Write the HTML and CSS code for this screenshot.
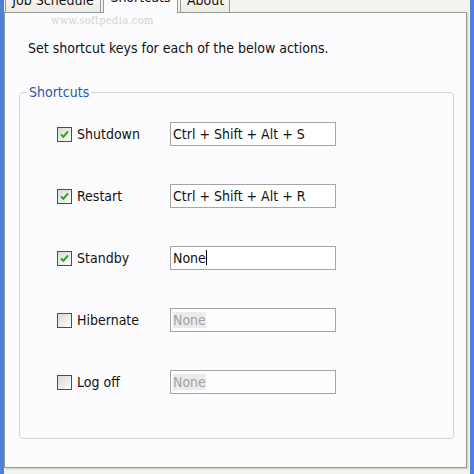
FILE: index.html
```html
<!DOCTYPE html>
<html lang="en">
<head>
  <meta charset="UTF-8">
  <title>Shortcuts</title>
  <link rel="stylesheet" href="styles.css">
</head>
<body>
  <div class="window">
    <div class="tabs">
      <div class="tab tab-job">Job Schedule</div>
      <div class="tab tab-active">Shortcuts</div>
      <div class="tab tab-about">About</div>
    </div>

    <div class="panel">
      <div class="watermark">www.softpedia.com</div>
      <p class="intro">Set shortcut keys for each of the below actions.</p>

      <fieldset class="group">
        <legend>Shortcuts</legend>

        <div class="row">
          <label class="check"><span class="box checked"><svg viewBox="0 0 15 15"><polyline points="3.5,7.5 6.2,10.2 11.5,4" /></svg></span>Shutdown</label>
          <div class="field">Ctrl + Shift + Alt + S</div>
        </div>

        <div class="row">
          <label class="check"><span class="box checked"><svg viewBox="0 0 15 15"><polyline points="3.5,7.5 6.2,10.2 11.5,4" /></svg></span>Restart</label>
          <div class="field">Ctrl + Shift + Alt + R</div>
        </div>

        <div class="row">
          <label class="check"><span class="box checked"><svg viewBox="0 0 15 15"><polyline points="3.5,7.5 6.2,10.2 11.5,4" /></svg></span>Standby</label>
          <div class="field">None<span class="caret"></span></div>
        </div>

        <div class="row">
          <label class="check"><span class="box"></span>Hibernate</label>
          <div class="field disabled"><span class="sel">None</span></div>
        </div>

        <div class="row">
          <label class="check"><span class="box"></span>Log off</label>
          <div class="field disabled"><span class="sel">None</span></div>
        </div>
      </fieldset>
    </div>
  </div>
</body>
</html>
```

FILE: styles.css
```css
/* Base */
html, body {
  margin: 0;
  height: 474px;
  overflow: hidden;
}

body {
  background: #f3f3ef;
  font-family: "DejaVu Sans Condensed", "DejaVu Sans", sans-serif;
  font-stretch: condensed;
  font-size: 14px;
  color: #111;
}

.window {
  height: 474px;
  box-sizing: border-box;
  border-left: 4px solid #4f80d8;
  border-right: 4px solid #4f80d8;
  display: flex;
  flex-direction: column;
}

/* Tabs */
.tabs {
  display: flex;
  align-items: flex-end;
  height: 22px;
  margin-top: -10px;
  padding-left: 1px;
  position: relative;
  z-index: 1;
}

.tab {
  box-sizing: border-box;
  height: 21px;
  padding: 0 6px;
  line-height: 17px;
  border: 1px solid #919b9c;
  border-bottom: none;
  border-radius: 3px 3px 0 0;
  background: linear-gradient(#ffffff, #eceae0);
  margin-right: 2px;
  text-align: center;
}

.tab-job {
  width: 96px;
}

.tab-active {
  width: 75px;
  height: 24px;
  line-height: 15px;
  background: #fcfcfe;
  margin-bottom: -1px;
}

.tab-about {
  width: 50px;
}

/* Panel */
.panel {
  position: relative;
  flex: 1;
  margin-bottom: 6px;
  margin-right: 3px;
  border: 1px solid #919b9c;
  background: #fcfcfe;
  box-shadow: 1px 1px 0 #d6d6d0, 2px 2px 0 #e6e6e2;
  padding: 0 12px 0 14px;
}

.watermark {
  position: absolute;
  left: 46px;
  top: 1px;
  font-family: "DejaVu Serif", serif;
  font-size: 11px;
  color: #d2d2d2;
  letter-spacing: 0.3px;
}

.intro {
  margin: 27px 0 0 9px;
  line-height: 16px;
}

/* Group box */
.group {
  margin: 28px 0 0 0;
  height: 355px;
  box-sizing: border-box;
  border: 1px solid #d6d6ce;
  border-radius: 4px;
  padding: 22px 0 0 7px;
}

.group legend {
  color: #2d56a8;
  padding: 0 2px;
  line-height: 16px;
}

.row {
  display: flex;
  align-items: center;
  height: 24px;
  margin-bottom: 38px;
  padding-left: 30px;
}

.check {
  display: flex;
  align-items: center;
  width: 113px;
  gap: 5px;
}

.box {
  box-sizing: border-box;
  width: 15px;
  height: 15px;
  border: 1px solid #2a5583;
  background: linear-gradient(135deg, #dcdcd6, #fbfbf8);
  display: inline-block;
}

.box svg {
  display: block;
  width: 13px;
  height: 13px;
}

.box polyline {
  fill: none;
  stroke: #21a321;
  stroke-width: 2.2;
}

.field {
  box-sizing: border-box;
  width: 166px;
  height: 24px;
  border: 1px solid #a5a5a5;
  background: #fff;
  padding: 0 2px;
  line-height: 22px;
  white-space: nowrap;
}

.caret {
  display: inline-block;
  width: 1px;
  height: 15px;
  background: #000;
  vertical-align: -2px;
}

.field.disabled {
  color: #a2a2a2;
  background: #fdfdfd;
}

.sel {
  background: #ebebeb;
}
```
